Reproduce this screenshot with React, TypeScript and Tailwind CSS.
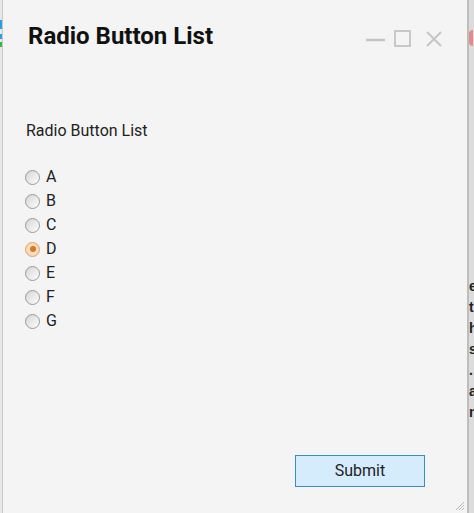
const options = ['A', 'B', 'C', 'D', 'E', 'F', 'G'];
const selected = 'D';

function Radio({ checked }: { checked: boolean }) {
  if (checked) {
    return (
      <span className="flex h-[15px] w-[15px] items-center justify-center rounded-full border border-[#e3a066] bg-[radial-gradient(circle,#fde8d2_0%,#f7d1ab_100%)]">
        <span className="h-[6px] w-[6px] rounded-full bg-[#d47a22]" />
      </span>
    );
  }
  return (
    <span className="h-[15px] w-[15px] rounded-full border border-[#9a9a9a] bg-[linear-gradient(135deg,#d4d4d4_0%,#f2f2f2_70%,#ffffff_100%)]" />
  );
}

function WindowControls() {
  return (
    <div className="flex items-center gap-[9px] text-[#c4c4c4]">
      <svg width="19" height="16" viewBox="0 0 19 16">
        <line x1="0" y1="9" x2="19" y2="9" stroke="currentColor" strokeWidth="2.5" />
      </svg>
      <svg width="17" height="17" viewBox="0 0 17 17">
        <rect x="1" y="1" width="15" height="15" fill="none" stroke="currentColor" strokeWidth="1.8" />
      </svg>
      <svg width="16" height="16" viewBox="0 0 16 16" className="ml-[6px]">
        <path d="M1 1 L15 15 M15 1 L1 15" stroke="currentColor" strokeWidth="1.8" />
      </svg>
    </div>
  );
}

export default function App() {
  return (
    <div className="flex h-[513px] w-[474px] overflow-hidden bg-[#e6e6e6] font-['Roboto',sans-serif]">
      {/* background app peeking out on the left */}
      <div className="flex w-[3px] flex-col border-r border-[#c8c8c8] bg-[#e8e8e8] pt-[20px]">
        <div className="h-[9px] bg-[#2aa0d8]" />
        <div className="mt-[5px] h-[5px] bg-[#2aa0d8]" />
        <div className="mt-[3px] h-[5px] bg-[#3bb34a]" />
      </div>

      <div className="relative flex flex-1 flex-col bg-[#f4f4f4]">
        <div className="flex items-start justify-between pl-[25px] pr-[25px] pt-[21px]">
          <h1 className="text-[24px] font-bold leading-[30px] text-[#111]">Radio Button List</h1>
          <div className="pt-[9px]">
            <WindowControls />
          </div>
        </div>

        <div className="pl-[22px] pt-[70px]">
          <p className="pl-[1px] text-[16px] leading-[20px] text-[#222]">Radio Button List</p>
          <div className="mt-[24px] flex flex-col">
            {options.map((o) => (
              <label key={o} className="flex h-[24px] items-center gap-[6px] text-[16px] text-[#222]">
                <Radio checked={o === selected} />
                <span>{o}</span>
              </label>
            ))}
          </div>
        </div>

        <div className="mt-auto flex justify-end pb-[26px] pr-[42px]">
          <button className="h-[32px] w-[130px] border border-[#3d8fb4] bg-[#d4ecfc] text-[16px] text-[#222]">
            Submit
          </button>
        </div>

        <svg width="10" height="10" viewBox="0 0 10 10" className="absolute bottom-[2px] right-[2px]">
          <path d="M9 1 L1 9 M9 4 L4 9 M9 7 L7 9" stroke="#b4b4b4" strokeWidth="1" />
        </svg>
      </div>

      {/* background app peeking out on the right */}
      <div className="flex w-[7px] flex-col overflow-hidden border-l-[2px] border-[#bdbdbd] bg-[#dcdcdc] font-['Liberation_Sans',sans-serif] text-[14px] font-bold leading-[21px] text-[#222]">
        <div className="mt-[30px] h-[16px] w-[4px] rounded-l-full bg-[#e58a8a]" />
        <div className="mt-[230px] flex flex-col">
          <span>e</span>
          <span>t</span>
          <span>h</span>
          <span>s</span>
          <span>.</span>
          <span>a</span>
          <span>n</span>
        </div>
      </div>
    </div>
  );
}
